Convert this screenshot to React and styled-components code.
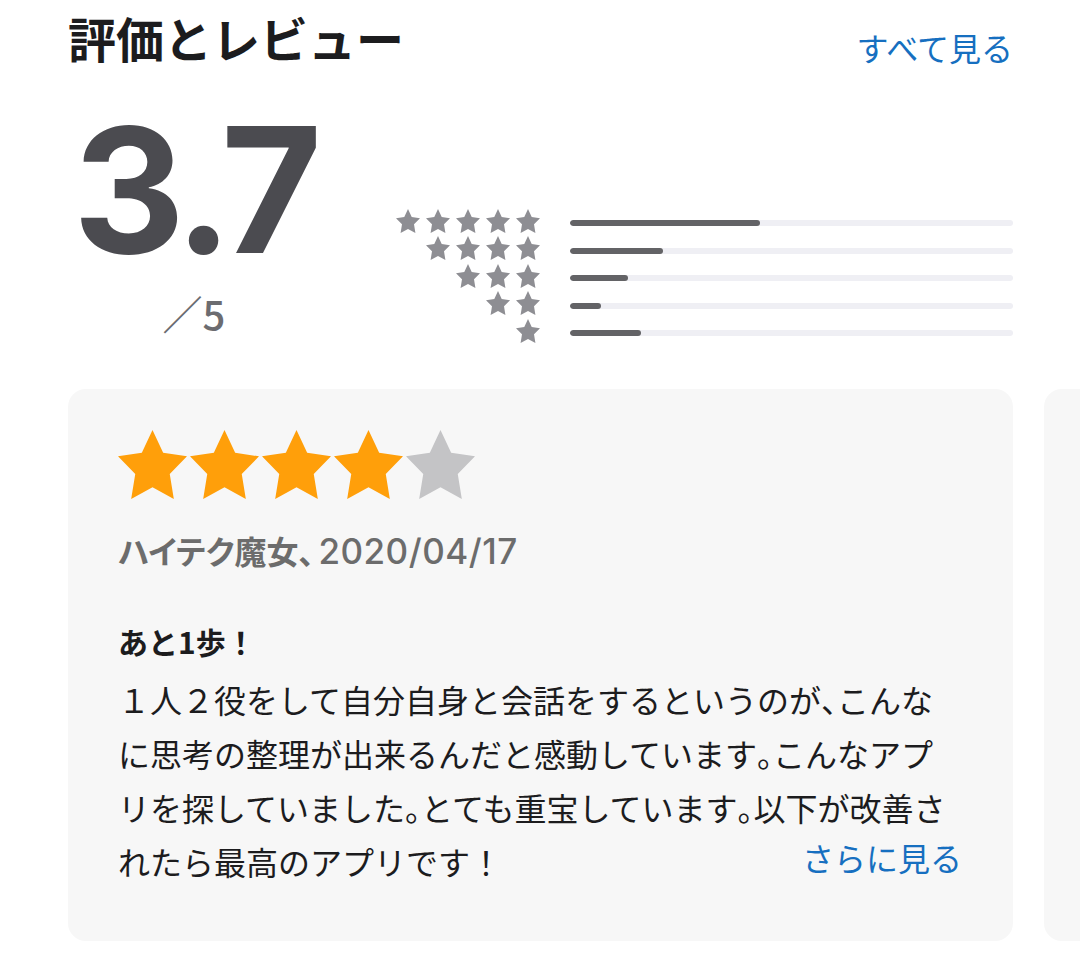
import React from 'react';
import styled, {createGlobalStyle} from 'styled-components';

const GlobalStyle = createGlobalStyle`
  html, body {
    margin: 0;
    padding: 0;
    background: #ffffff;
    overflow: hidden;
  }
  body {
    font-family: "Noto Sans CJK JP", "Noto Sans", sans-serif;
    color: #1c1c1e;
  }
`;

const Page = styled.div`
  padding: 9px 67px 0 68px;
`;

const Header = styled.div`
  display: flex;
  justify-content: space-between;
  align-items: baseline;
  height: 57px;
`;

const Title = styled.h2`
  margin: 0;
  font-size: 48px;
  line-height: 56px;
  font-weight: 700;
  color: #1c1c1e;
`;

const Link = styled.a`
  font-size: 32px;
  line-height: 40px;
  color: #166fc0;
  text-decoration: none;
  cursor: pointer;
`;

const HeaderLink = styled(Link)`
  position: relative;
  top: 3px;
`;

const Summary = styled.div`
  display: flex;
  align-items: flex-start;
  margin-top: 31px;
`;

const Score = styled.div`
  display: flex;
  flex-direction: column;
  align-items: center;
  width: 252px;
  margin-right: 10px;
`;

const Big = styled.div`
  font-family: Inter, "Liberation Sans", sans-serif;
  font-size: 174px;
  line-height: 186px;
  font-weight: 700;
  letter-spacing: -7px;
  color: #4b4b50;
`;

const OutOf = styled.div`
  margin-top: 10px;
  font-size: 40px;
  line-height: 40px;
  font-weight: 500;
  color: #6c6c70;
`;

const Histogram = styled.div`
  flex: 1;
  margin-top: 110px;
  margin-left: 64px;
  display: flex;
  flex-direction: column;
`;

const HistRow = styled.div`
  display: flex;
  align-items: center;
  height: 27.5px;
`;

const SmallStars = styled.div`
  width: 146px;
  display: flex;
  justify-content: flex-end;
  gap: 6px;
`;

const Track = styled.div`
  flex: 1;
  margin-left: 30px;
  margin-top: 5px;
  height: 6px;
  border-radius: 3px;
  background: #efeff4;
  overflow: hidden;
`;

const Fill = styled.div`
  height: 100%;
  border-radius: 3px;
  background: #636366;
`;

const Carousel = styled.div`
  display: flex;
  gap: 31px;
  margin-top: 44px;
`;

const Card = styled.div`
  flex: 0 0 945px;
  box-sizing: border-box;
  height: 552px;
  border-radius: 18px;
  background: #f7f7f7;
  padding: 41px 51px 0 50px;
`;

const CardStars = styled.div`
  display: flex;
  gap: 3px;
`;

const Author = styled.div`
  margin-top: 31px;
  font-size: 32px;
  line-height: 40px;
  font-weight: 600;
  color: #6c6c6c;
  font-feature-settings: "palt";
`;

const Digits = styled.span`
  font-family: Inter, "Liberation Sans", sans-serif;
  font-size: 35px;
  font-weight: 500;
  letter-spacing: 0.5px;
  margin-left: 4px;
`;

const ReviewTitle = styled.div`
  margin-top: 43px;
  margin-bottom: 4px;
  font-size: 30px;
  line-height: 54px;
  font-weight: 700;
  color: #1c1c1e;
`;

const Body = styled.div`
  font-size: 32px;
  line-height: 54px;
  color: #1c1c1e;
  white-space: nowrap;
`;

const LastLine = styled.div`
  display: flex;
  justify-content: space-between;
`;

const More = styled(Link)`
  line-height: 54px;
  position: relative;
  top: -4px;
`;

const P = styled.span`
  font-feature-settings: "halt";
`;

const StarPath = "M12 1.5l3.09 6.26L22 8.77l-5 4.87 1.18 6.88L12 17.27l-6.18 3.25L7 13.64 2 8.77l6.91-1.01L12 1.5z";

const Star = ({w, h, color}) => (
  <svg width={w} height={h} viewBox="2 1.5 20 19.02" preserveAspectRatio="none">
    <path d={StarPath} fill={color} />
  </svg>
);

const dist = [43, 21, 13, 7, 16];

const App = () => {
  return <Page>
    <GlobalStyle />
    <Header>
      <Title>評価とレビュー</Title>
      <HeaderLink>すべて見る</HeaderLink>
    </Header>
    <Summary>
      <Score>
        <Big>3.7</Big>
        <OutOf>／5</OutOf>
      </Score>
      <Histogram>
        {dist.map((pct, i) => (
          <HistRow key={i}>
            <SmallStars>
              {Array.from({length: 5 - i}).map((_, j) => <Star key={j} w={24} h={24} color="#8e8e93" />)}
            </SmallStars>
            <Track><Fill style={{width: pct + '%'}} /></Track>
          </HistRow>
        ))}
      </Histogram>
    </Summary>
    <Carousel>
      <Card>
        <CardStars>
          {[0, 1, 2, 3, 4].map(i => <Star key={i} w={69} h={69} color={i < 4 ? '#ff9f0a' : '#c4c4c6'} />)}
        </CardStars>
        <Author>ハイテク魔女、<Digits>2020/04/17</Digits></Author>
        <ReviewTitle>あと1歩！</ReviewTitle>
        <Body>
          １人２役をして自分自身と会話をするというのが<P>、</P>こんな<br />
          に思考の整理が出来るんだと感動しています<P>。</P>こんなアプ<br />
          リを探していました<P>。</P>とても重宝しています<P>。</P>以下が改善さ<br />
          <LastLine>
            <span>れたら最高のアプリです！</span>
            <More>さらに見る</More>
          </LastLine>
        </Body>
      </Card>
      <Card />
    </Carousel>
  </Page>
}

export default App;
